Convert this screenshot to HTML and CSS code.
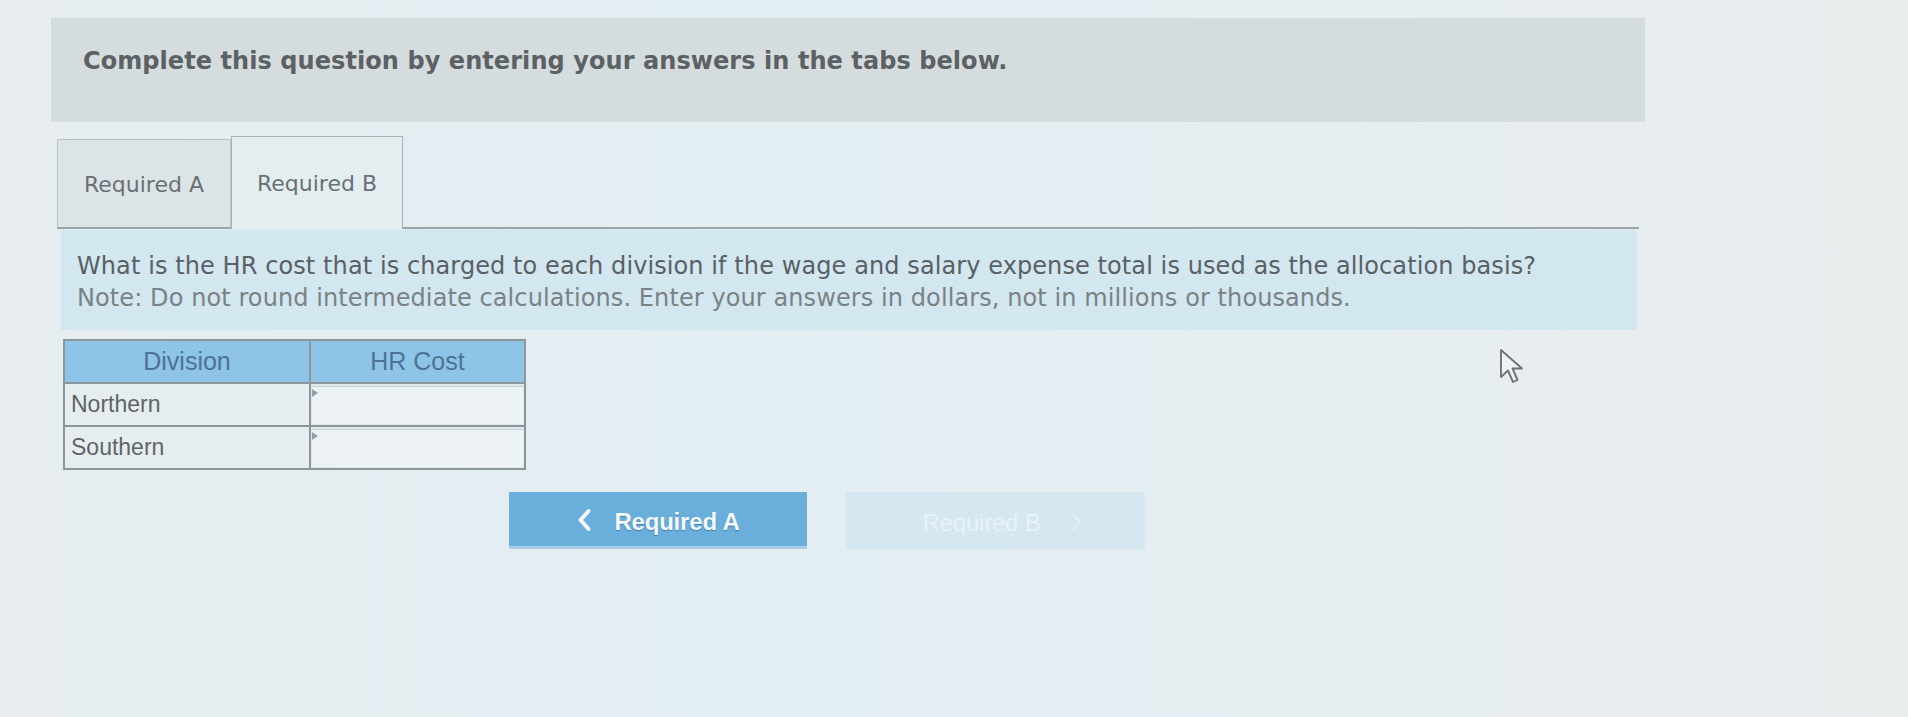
FILE: index.html
```html
<!DOCTYPE html>
<html>
<head>
<meta charset="utf-8">
<link rel="stylesheet" href="styles.css">
</head>
<body>
<div class="page">
  <div class="header">Complete this question by entering your answers in the tabs below.</div>
  <div class="tabbar">
    <div class="tab tab-inactive">Required A</div>
    <div class="tab tab-active">Required B</div>
    <div class="tabline"></div>
  </div>
  <div class="question">
    <div class="q1">What is the HR cost that is charged to each division if the wage and salary expense total is used as the allocation basis?</div>
    <div class="q2">Note: Do not round intermediate calculations. Enter your answers in dollars, not in millions or thousands.</div>
  </div>
  <table class="grid">
    <thead>
      <tr><th class="c1">Division</th><th class="c2">HR Cost</th></tr>
    </thead>
    <tbody>
      <tr><td class="label">Northern</td><td class="inp"><div class="box"><span class="tri"></span></div></td></tr>
      <tr><td class="label">Southern</td><td class="inp"><div class="box"><span class="tri"></span></div></td></tr>
    </tbody>
  </table>
  <div class="nav">
    <div class="btn btn-prev"><svg class="chev" width="16" height="26" viewBox="0 0 16 26"><path d="M12.5 4 L4.5 13 L12.5 22" fill="none" stroke="#f4f8fb" stroke-width="4" stroke-linecap="round" stroke-linejoin="round"/></svg>Required A</div>
    <div class="btn btn-next">Required B<svg class="chev2" width="12" height="22" viewBox="0 0 12 22"><path d="M3 4 L9 11 L3 18" fill="none" stroke="#e4eff5" stroke-width="2.4" stroke-linecap="round" stroke-linejoin="round"/></svg></div>
  </div>
</div>
<svg class="cursor" width="28" height="38" viewBox="0 0 28 38">
  <path d="M2 2 L2 29 L9 22.5 L14 34 L18.5 32 L13.5 20.5 L23 20.5 Z" fill="#eef2f3" stroke="#6e7376" stroke-width="1.9" stroke-linejoin="round"/>
</svg>
</body>
</html>
```
FILE: styles.css
```css
html, body {
  margin: 0;
  padding: 0;
}
body {
  width: 1908px;
  height: 717px;
  overflow: hidden;
  position: relative;
  background: linear-gradient(90deg, #e8edef 0%, #e4edf0 8%, #e3eef2 40%, #e5eef1 70%, #e8ecee 88%, #e9edee 100%);
  font-family: "DejaVu Sans", Verdana, sans-serif;
}
.page {
  padding: 18px 0 0 51px;
}
.header {
  width: 1594px;
  height: 104px;
  box-sizing: border-box;
  background: #d5dcde;
  padding: 29px 0 0 32px;
  font-weight: bold;
  font-size: 24px;
  line-height: 28px;
  letter-spacing: 0.07px;
  color: #5b6164;
}
.tabbar {
  display: flex;
  align-items: flex-end;
  margin: 14px 0 0 6px;
  width: 1582px;
  height: 93px;
}
.tab {
  box-sizing: border-box;
  display: flex;
  align-items: center;
  justify-content: center;
  font-size: 22px;
  color: #6a7073;
}
.tab-inactive {
  width: 174px;
  height: 90px;
  background: #dce4e7;
  border: 1px solid #b9c1c4;
  border-bottom: 2px solid #9ba5a9;
  padding-top: 2px;
}
.tab-active {
  width: 172px;
  height: 93px;
  background: #e4eef1;
  border: 1px solid #a9b2b6;
  border-bottom: none;
  padding-top: 1px;
}
.tabline {
  flex: 1;
  height: 0;
  border-bottom: 2px solid #9aa5a9;
}
.question {
  width: 1576px;
  height: 100px;
  box-sizing: border-box;
  margin: 1px 0 0 10px;
  background: #d2e7ef;
  padding: 20px 0 0 16px;
  font-size: 24px;
  line-height: 32px;
  letter-spacing: 0.09px;
}
.q1 {
  color: #5a6064;
}
.q2 {
  color: #7b8285;
}
.grid {
  margin: 9px 0 0 12px;
  border-collapse: collapse;
  font-family: "Liberation Sans", Arial, sans-serif;
  font-size: 23px;
}
.grid th {
  background: #8ec4e8;
  color: #4c7393;
  font-weight: normal;
  font-size: 25px;
  height: 41px;
  border: 2px solid #8a979d;
  padding: 0;
  text-align: center;
}
.grid th.c1 { width: 244px; }
.grid th.c2 { width: 213px; }
.grid td {
  border: 2px solid #8a969c;
  padding: 0;
  height: 39px;
}
.grid td.label {
  background: #e6edef;
  color: #5f6467;
  padding-left: 6px;
  text-align: left;
}
.grid td.inp {
  background: #dfe8eb;
  padding: 1px;
}
.box {
  position: relative;
  height: 37px;
  background: #edf3f5;
  border-top: 1px solid #c9d3d7;
}
.tri {
  position: absolute;
  left: 0;
  top: 2px;
  width: 0;
  height: 0;
  border-top: 4px solid transparent;
  border-bottom: 4px solid transparent;
  border-left: 6px solid #8da2ae;
}
.nav {
  display: flex;
  margin: 22px 0 0 458px;
  gap: 39px;
}
.btn {
  box-sizing: border-box;
  width: 298px;
  height: 57px;
  display: flex;
  align-items: center;
  justify-content: center;
  font-family: "Liberation Sans", Arial, sans-serif;
  font-weight: bold;
  font-size: 24px;
  letter-spacing: -0.2px;
  padding-top: 5px;
}
.btn-prev {
  background: #6aaedc;
  color: #f4f8fb;
  border-bottom: 3px solid #a9cde6;
  text-shadow: 0 1px 1px #3f7ea8;
}
.btn-next {
  width: 299px;
  background: #d5e7f0;
  color: #e8f2f7;
  font-weight: normal;
  padding-left: 14px;
}
.chev {
  margin-right: 22px;
  margin-top: -3px;
}
.chev2 {
  margin-left: 30px;
  margin-top: -3px;
}
.cursor {
  position: absolute;
  left: 1499px;
  top: 348px;
}
```
